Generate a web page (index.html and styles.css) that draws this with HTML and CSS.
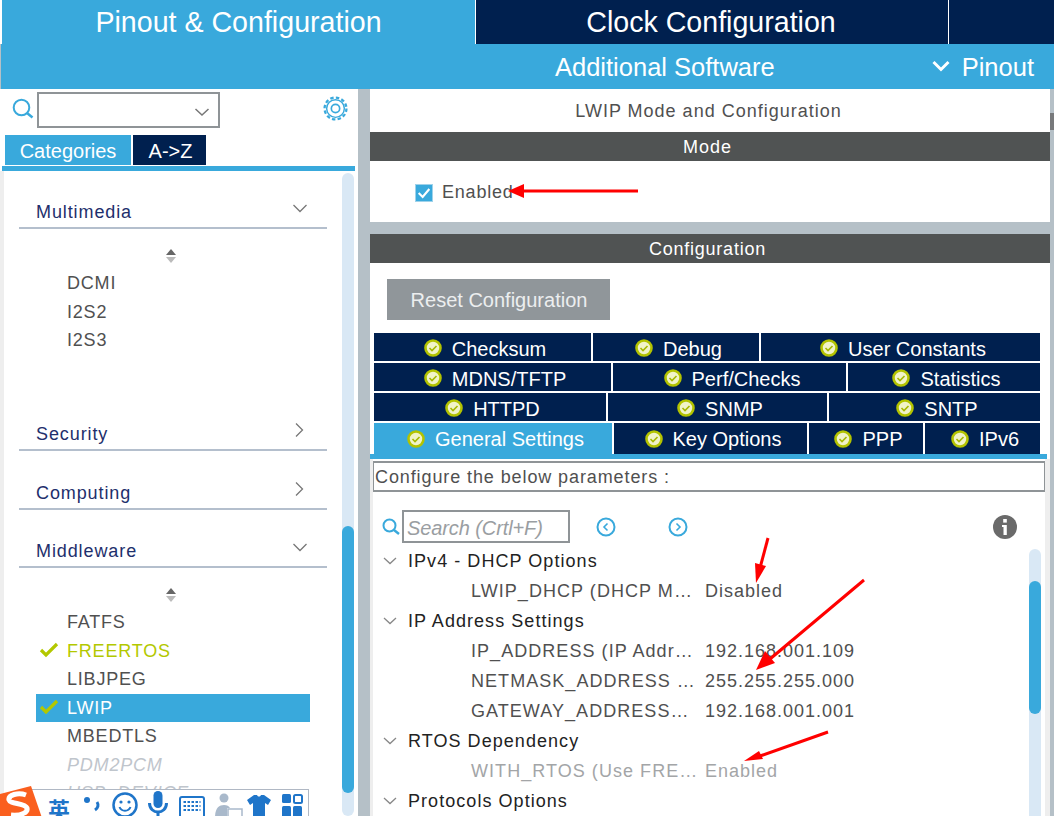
FILE: index.html
```html
<!DOCTYPE html>
<html lang="en">
<head>
<meta charset="utf-8">
<title>LWIP Mode and Configuration</title>
<link rel="stylesheet" href="styles.css">
</head>
<body>
<div class="page">
  <header class="header">
    <div class="top-tabs">
      <div class="top-tab top-active">Pinout &amp; Configuration</div>
      <div class="top-tab top-clock">Clock Configuration</div>
      <div class="top-tab top-rest"></div>
    </div>
    <div class="sub-bar">
      <div class="sub-center">Additional Software</div>
      <div class="sub-pinout">
        <svg class="sub-chev" viewBox="0 0 18 12"><path d="M1.500 2 9 9.500 16.500 2" fill="none" stroke="#fff" stroke-width="3"/></svg>
        <span>Pinout</span>
      </div>
    </div>
  </header>

  <div class="main">
    <aside class="sidebar">
      <div class="search-row">
        <svg class="side-search" viewBox="0 0 22 22"><circle cx="9.500" cy="9.500" r="7.800" fill="none" stroke="#39a9dc" stroke-width="2"/><path d="M15 15l5.500 4.500" stroke="#39a9dc" stroke-width="2.500" fill="none"/></svg>
        <div class="combo">
          <svg class="combo-chev" viewBox="0 0 16 10"><path d="M1.500 2 8 8 14.500 2" fill="none" stroke="#777" stroke-width="1.500"/></svg>
        </div>
        <svg class="gear" viewBox="0 0 24 24"><g fill="none" stroke="#39a9dc"><circle cx="12" cy="12" r="4" stroke-width="1.600"/><circle cx="12" cy="12" r="8.500" stroke-width="1.400"/><circle cx="12" cy="12" r="10.500" stroke-width="2.200" stroke-dasharray="3.300 2.200"/></g></svg>
      </div>
      <div class="side-tabs">
        <div class="side-tab side-tab-on">Categories</div>
        <div class="side-tab side-tab-off">A-&gt;Z</div>
      </div>
      <div class="side-rule"></div>
      <div class="side-panel">
        <div class="cat-scroll">
          <section class="cat cat-first">
            <div class="cat-head"><span>Multimedia</span><svg class="cat-chev" viewBox="0 0 14 9"><path d="M.5 1 7 7.500 13.500 1" fill="none" stroke="#777" stroke-width="1.300"/></svg></div>
            <div class="sort"><svg viewBox="0 0 12 14"><path d="M6 0 11 6H1z" fill="#666"/><path d="M6 14 1 8h10z" fill="#bbb"/></svg></div>
            <ul class="items">
              <li class="item">DCMI</li>
              <li class="item">I2S2</li>
              <li class="item">I2S3</li>
            </ul>
          </section>
          <section class="cat cat-security">
            <div class="cat-head"><span>Security</span><svg class="cat-chev cat-chev-r" viewBox="0 0 9 14"><path d="M1 .5 7.500 7 1 13.500" fill="none" stroke="#777" stroke-width="1.300"/></svg></div>
          </section>
          <section class="cat cat-computing">
            <div class="cat-head"><span>Computing</span><svg class="cat-chev cat-chev-r" viewBox="0 0 9 14"><path d="M1 .5 7.500 7 1 13.500" fill="none" stroke="#777" stroke-width="1.300"/></svg></div>
          </section>
          <section class="cat cat-middleware">
            <div class="cat-head"><span>Middleware</span><svg class="cat-chev" viewBox="0 0 14 9"><path d="M.5 1 7 7.500 13.500 1" fill="none" stroke="#777" stroke-width="1.300"/></svg></div>
            <div class="sort"><svg viewBox="0 0 12 14"><path d="M6 0 11 6H1z" fill="#666"/><path d="M6 14 1 8h10z" fill="#bbb"/></svg></div>
            <ul class="items">
              <li class="item">FATFS</li>
              <li class="item item-ok"><svg class="tick" viewBox="0 0 20 16"><path d="M2 8l5 5L18 2" fill="none" stroke="#b3c800" stroke-width="3.200"/></svg>FREERTOS</li>
              <li class="item">LIBJPEG</li>
              <li class="item item-sel"><svg class="tick" viewBox="0 0 20 16"><path d="M2 8l5 5L18 2" fill="none" stroke="#b3c800" stroke-width="3.200"/></svg>LWIP</li>
              <li class="item">MBEDTLS</li>
              <li class="item item-off">PDM2PCM</li>
              <li class="item item-off">USB_DEVICE</li>
            </ul>
          </section>
        </div>
        <div class="side-track"><div class="side-thumb"></div></div>
      </div>
    </aside>

    <div class="splitter"></div>

    <main class="content">
      <div class="mode-title">LWIP Mode and Configuration</div>
      <div class="dark-bar">Mode</div>
      <div class="mode-body">
        <span class="checkbox"><svg viewBox="0 0 18 18"><path d="M3 9l4.500 4.500L15 4.500" fill="none" stroke="#fff" stroke-width="2.400"/></svg></span>
        <span class="enabled">Enabled</span>
      </div>
      <div class="section-gap"></div>
      <div class="dark-bar dark-config">Configuration</div>
      <div class="config">
        <div class="reset">Reset Configuration</div>
        <div class="tabrows">
          <div class="tabrow">
            <div class="ptab w218"><svg class="ok" viewBox="0 0 18 18"><use href="#ok-icon"/></svg>Checksum</div>
            <div class="ptab w167"><svg class="ok" viewBox="0 0 18 18"><use href="#ok-icon"/></svg>Debug</div>
            <div class="ptab grow"><svg class="ok" viewBox="0 0 18 18"><use href="#ok-icon"/></svg>User Constants</div>
          </div>
          <div class="tabrow">
            <div class="ptab w237"><svg class="ok" viewBox="0 0 18 18"><use href="#ok-icon"/></svg>MDNS/TFTP</div>
            <div class="ptab w233"><svg class="ok" viewBox="0 0 18 18"><use href="#ok-icon"/></svg>Perf/Checks</div>
            <div class="ptab grow"><svg class="ok" viewBox="0 0 18 18"><use href="#ok-icon"/></svg>Statistics</div>
          </div>
          <div class="tabrow">
            <div class="ptab w232"><svg class="ok" viewBox="0 0 18 18"><use href="#ok-icon"/></svg>HTTPD</div>
            <div class="ptab w219"><svg class="ok" viewBox="0 0 18 18"><use href="#ok-icon"/></svg>SNMP</div>
            <div class="ptab grow"><svg class="ok" viewBox="0 0 18 18"><use href="#ok-icon"/></svg>SNTP</div>
          </div>
          <div class="tabrow tabrow-last">
            <div class="ptab w238 ptab-on"><svg class="ok" viewBox="0 0 18 18"><use href="#ok-icon"/></svg>General Settings</div>
            <div class="ptab w193"><svg class="ok" viewBox="0 0 18 18"><use href="#ok-icon"/></svg>Key Options</div>
            <div class="ptab w114"><svg class="ok" viewBox="0 0 18 18"><use href="#ok-icon"/></svg>PPP</div>
            <div class="ptab grow"><svg class="ok" viewBox="0 0 18 18"><use href="#ok-icon"/></svg>IPv6</div>
          </div>
        </div>
        <div class="tab-rule"></div>
        <div class="lower">
          <div class="param-box">Configure the below parameters :</div>
          <div class="tool-row">
            <svg class="tree-search" viewBox="0 0 18 18"><circle cx="7.500" cy="7.500" r="6" fill="none" stroke="#39a9dc" stroke-width="2"/><path d="M12 12l5 4" stroke="#39a9dc" stroke-width="2.500" fill="none"/></svg>
            <div class="tree-input">Search (Crtl+F)</div>
            <svg class="nav nav-prev" viewBox="0 0 20 20"><circle cx="10" cy="10" r="8.500" fill="none" stroke="#39a9dc" stroke-width="2"/><path d="M11.500 6.500 8 10l3.500 3.500" fill="none" stroke="#39a9dc" stroke-width="1.600"/></svg>
            <svg class="nav nav-next" viewBox="0 0 20 20"><circle cx="10" cy="10" r="8.500" fill="none" stroke="#39a9dc" stroke-width="2"/><path d="M8.500 6.500 12 10l-3.500 3.500" fill="none" stroke="#39a9dc" stroke-width="1.600"/></svg>
            <span class="info"><svg viewBox="0 0 24 24"><circle cx="12" cy="12" r="12" fill="#6a6a6a"/><rect x="10.200" y="4" width="3.600" height="3.600" fill="#fff"/><path d="M9 10h4.800v10H10.500v-8H9z" fill="#fff"/></svg></span>
          </div>
          <div class="tree-area">
            <div class="tree">
              <div class="t-group"><svg class="t-chev" viewBox="0 0 14 8"><path d="M1 1l6 5.500L13 1" fill="none" stroke="#888" stroke-width="1.300"/></svg>IPv4 - DHCP Options</div>
              <div class="t-row"><span class="t-key">LWIP_DHCP (DHCP M…</span><span class="t-val">Disabled</span></div>
              <div class="t-group"><svg class="t-chev" viewBox="0 0 14 8"><path d="M1 1l6 5.500L13 1" fill="none" stroke="#888" stroke-width="1.300"/></svg>IP Address Settings</div>
              <div class="t-row"><span class="t-key">IP_ADDRESS (IP Addr…</span><span class="t-val">192.168.001.109</span></div>
              <div class="t-row"><span class="t-key">NETMASK_ADDRESS …</span><span class="t-val">255.255.255.000</span></div>
              <div class="t-row"><span class="t-key">GATEWAY_ADDRESS…</span><span class="t-val">192.168.001.001</span></div>
              <div class="t-group"><svg class="t-chev" viewBox="0 0 14 8"><path d="M1 1l6 5.500L13 1" fill="none" stroke="#888" stroke-width="1.300"/></svg>RTOS Dependency</div>
              <div class="t-row t-dim"><span class="t-key">WITH_RTOS (Use FRE…</span><span class="t-val">Enabled</span></div>
              <div class="t-group"><svg class="t-chev" viewBox="0 0 14 8"><path d="M1 1l6 5.500L13 1" fill="none" stroke="#888" stroke-width="1.300"/></svg>Protocols Options</div>
            </div>
            <div class="tree-track"><div class="tree-thumb"></div></div>
          </div>
        </div>
      </div>
    </main>
    <div class="gutter"></div>
  </div>

  <div class="ime">
    <svg class="ime-logo" viewBox="0 0 42 32"><path d="M0 8 31 0l11 32H0z" fill="#fa5f1e"/><path d="M26 9C18 6 8 9 9 14c1 4 16 3 18 8 1 4-5 8-16 7" fill="none" stroke="#fff" stroke-width="5"/></svg>
    <span class="ime-cn">英</span>
    <svg class="ime-ic ime-punct" viewBox="0 0 18 28"><circle cx="4" cy="10" r="3" fill="#1f75c9"/><path d="M14 12c2 3 1 6-2 8" fill="none" stroke="#1f75c9" stroke-width="3"/></svg>
    <svg class="ime-ic ime-face" viewBox="0 0 26 28"><circle cx="13" cy="15" r="11.500" fill="none" stroke="#1f75c9" stroke-width="2.500"/><circle cx="9" cy="12" r="1.600" fill="#1f75c9"/><circle cx="17" cy="12" r="1.600" fill="#1f75c9"/><path d="M7.500 17c2 5 9 5 11 0" fill="none" stroke="#1f75c9" stroke-width="2"/></svg>
    <svg class="ime-ic ime-mic" viewBox="0 0 20 28"><rect x="5.500" y="1" width="9" height="17" rx="4.500" fill="#1f75c9"/><path d="M1.500 13c0 12 17 12 17 0" fill="none" stroke="#1f75c9" stroke-width="3"/><path d="M10 22v6" stroke="#1f75c9" stroke-width="3"/></svg>
    <svg class="ime-ic ime-keys" viewBox="0 0 26 28"><rect x="1" y="7" width="24" height="21" rx="2" fill="none" stroke="#1f75c9" stroke-width="2"/><path d="M4.500 12h17M4.500 16h17M4.500 20h17" stroke="#1f75c9" stroke-width="2" stroke-dasharray="2.500 1.500"/></svg>
    <svg class="ime-ic ime-person" viewBox="0 0 28 28"><circle cx="9" cy="8" r="4.500" fill="#a9b9cb"/><path d="M0 28c0-10 4-13 9-13 3 0 5 1 6 3H12v10z" fill="#a9b9cb"/><rect x="13" y="19" width="14" height="9" fill="#fff" stroke="#a9b9cb" stroke-width="1.500"/></svg>
    <svg class="ime-ic ime-shirt" viewBox="0 0 24 28"><path d="M7 5h3c1 2 3 2 4 0h3l7 5-3 5-3-2v15H6V13l-3 2-3-5z" fill="#1f75c9"/></svg>
    <svg class="ime-ic ime-grid" viewBox="0 0 22 28"><rect x="1" y="4" width="9" height="9" rx="1.500" fill="#1f75c9"/><rect x="13" y="5" width="8" height="8" rx="1.500" fill="none" stroke="#1f75c9" stroke-width="2"/><rect x="1" y="16" width="9" height="12" rx="1.500" fill="#1f75c9"/><rect x="12" y="16" width="9" height="12" rx="1.500" fill="#1f75c9"/></svg>
  </div>

  <svg class="arrows" viewBox="0 0 1054 816">
    <g stroke="#f00" stroke-width="3" fill="#f00">
      <path d="M638 191H520"/>
      <path d="M768 538 760 568"/>
      <path d="M864 580 770 659"/>
      <path d="M828 732 760 756"/>
    </g>
    <g fill="#f00">
      <path d="M508 191 524 184V198z"/>
      <path d="M756 583 755 563 766 566z"/>
      <path d="M756 670 765 651 775 663z"/>
      <path d="M744 761 759 751 763 759z"/>
    </g>
  </svg>

  <svg class="defs" width="0" height="0"><defs>
    <g id="ok-icon"><circle cx="9" cy="9" r="7.500" fill="#f1f3c8" stroke="#b3c300" stroke-width="2.600"/><path d="M5.500 9l2.500 2.500L12.500 7" fill="none" stroke="#a7b800" stroke-width="1.600"/></g>
  </defs></svg>
</div>
</body>
</html>
```

FILE: styles.css
```css
* { box-sizing: border-box; }
html, body { margin: 0; padding: 0; }
body { font-family: "Liberation Sans", Arial, sans-serif; color: #505050; background: #b5c0c7; }
ul { list-style: none; margin: 0; padding: 0; }
svg { display: block; flex: none; }

.page { position: relative; width: 1054px; height: 816px; overflow: hidden; }

/* header */
.header { height: 89px; color: #fff; }
.top-tabs { display: flex; height: 44px; background: #fff; }
.top-tab { display: flex; align-items: center; justify-content: center; font-size: 28.600px; }
.top-active { width: 473px; margin-left: 2px; background: #39a9dc; }
.top-clock { width: 472px; margin-left: 1px; padding-right: 2px; background: #00204f; }
.top-rest { flex: 1; margin-left: 1px; background: #00204f; }
.sub-bar { position: relative; display: flex; align-items: center; height: 45px; margin-left: 1px; padding-top: 2px; background: #39a9dc; font-size: 25.500px; }
.sub-center { margin-left: 554px; }
.sub-pinout { display: flex; align-items: center; margin-left: auto; margin-right: 20px; }
.sub-chev { width: 18px; height: 12px; margin-right: 12px; margin-top: -3px; }

/* layout */
.main { display: flex; height: 727px; }
.sidebar { display: flex; flex-direction: column; width: 358px; background: #fff; }
.splitter { width: 12px; }
.content { display: flex; flex-direction: column; width: 680px; background: #fff; }
.gutter { width: 4px; }
.gutter::before { content: ""; display: block; height: 17px; margin-top: 24px; background: #77797b; }

/* sidebar */
.search-row { display: flex; align-items: flex-start; height: 46px; padding: 3px 10px 0 12px; }
.side-search { width: 22px; height: 22px; margin-top: 6px; }
.combo { position: relative; width: 183px; height: 36px; margin-left: 3px; border: 2px solid #8f9497; }
.combo-chev { position: absolute; right: 8px; top: 13px; width: 16px; height: 10px; }
.gear { width: 25px; height: 25px; margin: 4px 0 0 auto; }
.side-tabs { display: flex; gap: 2px; height: 31px; padding-left: 5px; font-size: 20px; }
.side-tab { display: flex; align-items: center; justify-content: center; height: 30px; padding-top: 2px; color: #fff; }
.side-tab-on { width: 126px; background: #39a9dc; }
.side-tab-off { width: 73px; padding-left: 2px; background: #00204f; }
.side-rule { width: 353px; height: 5px; margin-left: 2px; background: #39a9dc; flex: none; }
.side-panel { position: relative; display: flex; flex: 1; min-height: 0; border-left: 4px solid #eee; }
.cat-scroll { width: 338px; }
.cat-head { display: flex; align-items: center; justify-content: space-between; width: 308px; height: 34px; margin-left: 15px; padding-left: 17px; padding-right: 20px; padding-top: 2px; border-bottom: 2px solid #b4bfcd; color: #1e2f6c; font-size: 18px; letter-spacing: .9px; }
.cat-first { margin-top: 24px; }
.cat-security { margin-top: 63px; }
.cat-computing { margin-top: 25px; }
.cat-middleware { margin-top: 24px; }
.cat-chev { width: 14px; height: 9px; margin-top: -8px; }
.cat-chev-r { width: 9px; height: 14px; margin-right: 3px; margin-top: -8px; }
.sort { display: flex; justify-content: center; height: 39.750px; padding-top: 20px; padding-right: 0; width: 334px; }
.sort svg { width: 12px; height: 14px; }
.items { width: 274px; margin-left: 32px; font-size: 18px; letter-spacing: .8px; }
.item { display: flex; align-items: center; height: 28.500px; padding-left: 31px; padding-top: 1px; position: relative; }
.item-ok { color: #b3c800; }
.item-sel { background: #39a9dc; color: #fff; }
.item-off { color: #bfc5cc; font-style: italic; }
.tick { position: absolute; left: 3px; top: 5px; width: 20px; height: 16px; }
.side-track { position: relative; width: 12px; height: 643px; margin-top: 2px; border-radius: 6px; background: #d9e8f5; }
.side-thumb { width: 12px; height: 267px; margin-top: 353px; border-radius: 6px; background: #39a9dc; position: absolute; top: 0; }

/* mode */
.mode-title { display: flex; align-items: center; justify-content: center; height: 43px; padding: 2px 3px 0 0; font-size: 18px; letter-spacing: 1px; }
.dark-bar { display: flex; align-items: center; justify-content: center; height: 29px; padding: 2px 5px 0 0; background: #505353; color: #fff; font-size: 18px; letter-spacing: 1px; flex: none; }
.dark-config { letter-spacing: .75px; }
.mode-body { display: flex; align-items: center; height: 61px; padding: 2px 0 0 45px; font-size: 18px; letter-spacing: .8px; flex: none; }
.checkbox { display: block; width: 18px; height: 18px; margin-right: 9px; background: #39a9dc; border: 1px solid #9fd2ea; }
.checkbox svg { width: 16px; height: 16px; }
.section-gap { height: 12px; background: #b5c0c7; flex: none; }

/* config */
.config { display: flex; flex-direction: column; flex: 1; min-height: 0; }
.reset { display: flex; align-items: center; justify-content: center; width: 223px; height: 41px; margin: 16px 0 13px 17px; padding: 2px 0 0 1px; background: #90969a; color: #eceeef; font-size: 20px; flex: none; }
.tabrows { display: flex; flex-direction: column; gap: 2px; padding: 0 10px 0 4px; font-size: 20px; color: #fff; flex: none; }
.tabrow { display: flex; gap: 2px; height: 28px; }
.tabrow .ptab { padding-top: 4px; padding-left: 5px; }
.tabrow-last { height: 31px; }
.tabrow-last .ptab { padding-top: 2px; }
.ptab { display: flex; align-items: center; justify-content: center; background: #00204f; }
.ptab-on { background: #39a9dc; }
.grow { flex: 1; }
.w218 { width: 217px; }
.w167 { width: 166px; }
.w237 { width: 237px; }
.w233 { width: 233px; }
.w232 { width: 232px; }
.w219 { width: 219px; }
.w238 { width: 238px; }
.w193 { width: 193px; }
.w114 { width: 114px; }
.ok { width: 18px; height: 18px; margin-right: 10px; margin-top: -2px; }
.tab-rule { height: 5px; margin-right: 3px; background: #39a9dc; flex: none; }
.lower { display: flex; flex-direction: column; flex: 1; min-height: 0; border-left: 3px solid #eee; border-right: 5px solid #eee; }
.param-box { display: flex; align-items: center; height: 31px; margin: 2px 0 0 0; padding: 2px 0 0 1px; border: 2px solid #8f9497; border-left-width: 1px; border-right-width: 1px; font-size: 18px; letter-spacing: .9px; background: #fff; flex: none; }
.tool-row { position: relative; display: flex; align-items: center; height: 33px; margin-top: 18px; padding-left: 9px; flex: none; }
.tree-search { width: 18px; height: 18px; }
.tree-input { display: flex; align-items: center; width: 168px; height: 33px; margin-left: 2px; padding: 3px 0 0 3px; border: 2px solid #8f9497; color: #9a9ea2; font-size: 20px; font-style: italic; letter-spacing: -.1px; }
.nav { width: 20px; height: 20px; }
.nav-prev { margin-left: 26px; }
.nav-next { margin-left: 52px; }
.info { display: block; margin-left: auto; margin-right: 28px; }
.info svg { width: 24px; height: 24px; }
.tree-area { display: flex; flex: 1; min-height: 0; margin-top: 3px; }
.tree { flex: 1; font-size: 18px; letter-spacing: 1.050px; }
.t-group { display: flex; align-items: center; height: 30px; padding-left: 10px; color: #222; }
.t-chev { width: 14px; height: 8px; margin-right: 11px; }
.t-row { display: flex; align-items: center; height: 30px; padding-left: 98px; }
.t-key { width: 234px; white-space: nowrap; }
.t-val { letter-spacing: 1px; }
.t-dim { color: #a3a5a7; }
.tree-track { position: relative; width: 12px; height: 300px; margin: 3px 4px 0 0; border-radius: 6px; background: #d9e8f5; }
.tree-thumb { width: 12px; height: 133px; margin-top: 32px; border-radius: 6px; background: #39a9dc; position: absolute; top: 0; }

/* overlays */
.ime { position: absolute; left: 0; top: 786px; display: flex; width: 309px; height: 30px; }
.ime::before { content: ""; position: absolute; left: 30px; right: 0; top: 3px; bottom: 0; background: #fff; border: 1px solid #b0b8c4; border-bottom: 0; }
.ime-logo { position: relative; width: 42px; height: 32px; }
.ime-cn { position: relative; margin: 11px 0 0 6px; color: #1f75c9; font: 700 22px/22px "Noto Sans CJK SC", sans-serif; }
.ime-ic { position: relative; height: 28px; margin-top: 4px; }
.ime-punct { width: 18px; margin-left: 13px; }
.ime-face { width: 26px; margin-left: 11px; }
.ime-mic { width: 20px; margin-left: 10px; }
.ime-keys { width: 26px; margin-left: 11px; }
.ime-person { width: 28px; margin-left: 10px; }
.ime-shirt { width: 24px; margin-left: 4px; }
.ime-grid { width: 22px; margin-left: 10px; }
.arrows { position: absolute; left: 0; top: 0; width: 1054px; height: 816px; pointer-events: none; }
.defs { position: absolute; }
```
